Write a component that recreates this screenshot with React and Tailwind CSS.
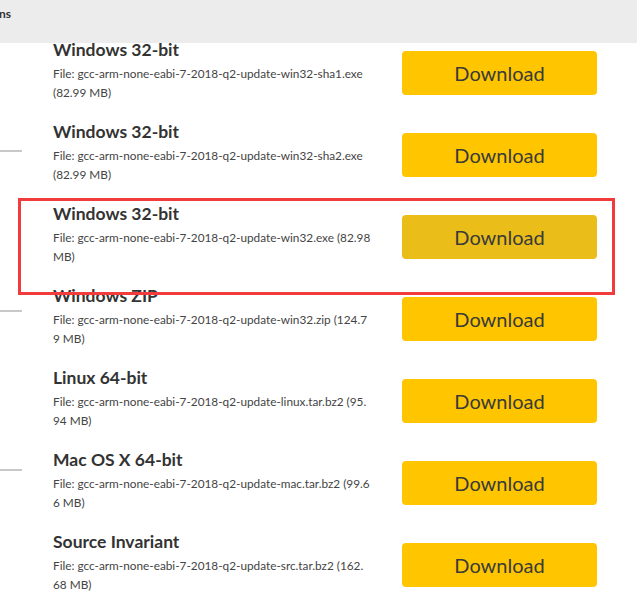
import React from 'react';

const files = [
  { title: 'Windows 32-bit', lines: ['File: gcc-arm-none-eabi-7-2018-q2-update-win32-sha1.exe', '(82.99 MB)'] },
  { title: 'Windows 32-bit', lines: ['File: gcc-arm-none-eabi-7-2018-q2-update-win32-sha2.exe', '(82.99 MB)'] },
  { title: 'Windows 32-bit', lines: ['File: gcc-arm-none-eabi-7-2018-q2-update-win32.exe (82.98', 'MB)'], active: true },
  { title: 'Windows ZIP', lines: ['File: gcc-arm-none-eabi-7-2018-q2-update-win32.zip (124.7', '9 MB)'] },
  { title: 'Linux 64-bit', lines: ['File: gcc-arm-none-eabi-7-2018-q2-update-linux.tar.bz2 (95.', '94 MB)'] },
  { title: 'Mac OS X 64-bit', lines: ['File: gcc-arm-none-eabi-7-2018-q2-update-mac.tar.bz2 (99.6', '6 MB)'] },
  { title: 'Source Invariant', lines: ['File: gcc-arm-none-eabi-7-2018-q2-update-src.tar.bz2 (162.', '68 MB)'] },
];

const FileRow = ({ file }) => (
  <div className="flex items-start h-[82px]">
    <div className="w-[349px] shrink-0">
      <h3 className="text-[17.5px] leading-[14px] font-bold text-[#333333]">{file.title}</h3>
      <div className="mt-[7px] text-[11.8px] leading-[19px] text-[#444444]">
        {file.lines.map((l, i) => (
          <div key={i} className="whitespace-nowrap">{l}</div>
        ))}
      </div>
    </div>
    <button
      className={
        'mt-[8px] w-[195px] h-[44px] rounded-[4px] text-[20px] text-[#3a3a3a] ' +
        (file.active ? 'bg-[#ebbd18]' : 'bg-[#ffc600]')
      }
    >
      Download
    </button>
  </div>
);

export default function App() {
  return (
    <div className="relative w-[637px] h-[594px] overflow-hidden bg-white" style={{ fontFamily: 'Lato, "Open Sans", sans-serif' }}>
      <div className="h-[43px] bg-[#ececec] flex items-start">
        <span className="mt-[5px] -ml-[1px] text-[12px] font-bold text-[#333333]">ns</span>
      </div>

      <div className="flex">
        {/* left menu edge */}
        <div className="w-[22px] shrink-0">
          <div className="h-[109px] border-b-2 border-[#c8c8c8]" />
          <div className="h-[160px] border-b-2 border-[#c8c8c8]" />
          <div className="h-[159px] border-b-2 border-[#c8c8c8]" />
        </div>

        <div className="ml-[31px] flex flex-col">
          {files.map((f, i) => (
            <FileRow key={i} file={f} />
          ))}
        </div>
      </div>

      {/* annotation box */}
      <div className="absolute left-[18px] top-[198px] w-[597px] h-[97px] border-[3px] border-[#f23b3b] pointer-events-none" />
    </div>
  );
}
